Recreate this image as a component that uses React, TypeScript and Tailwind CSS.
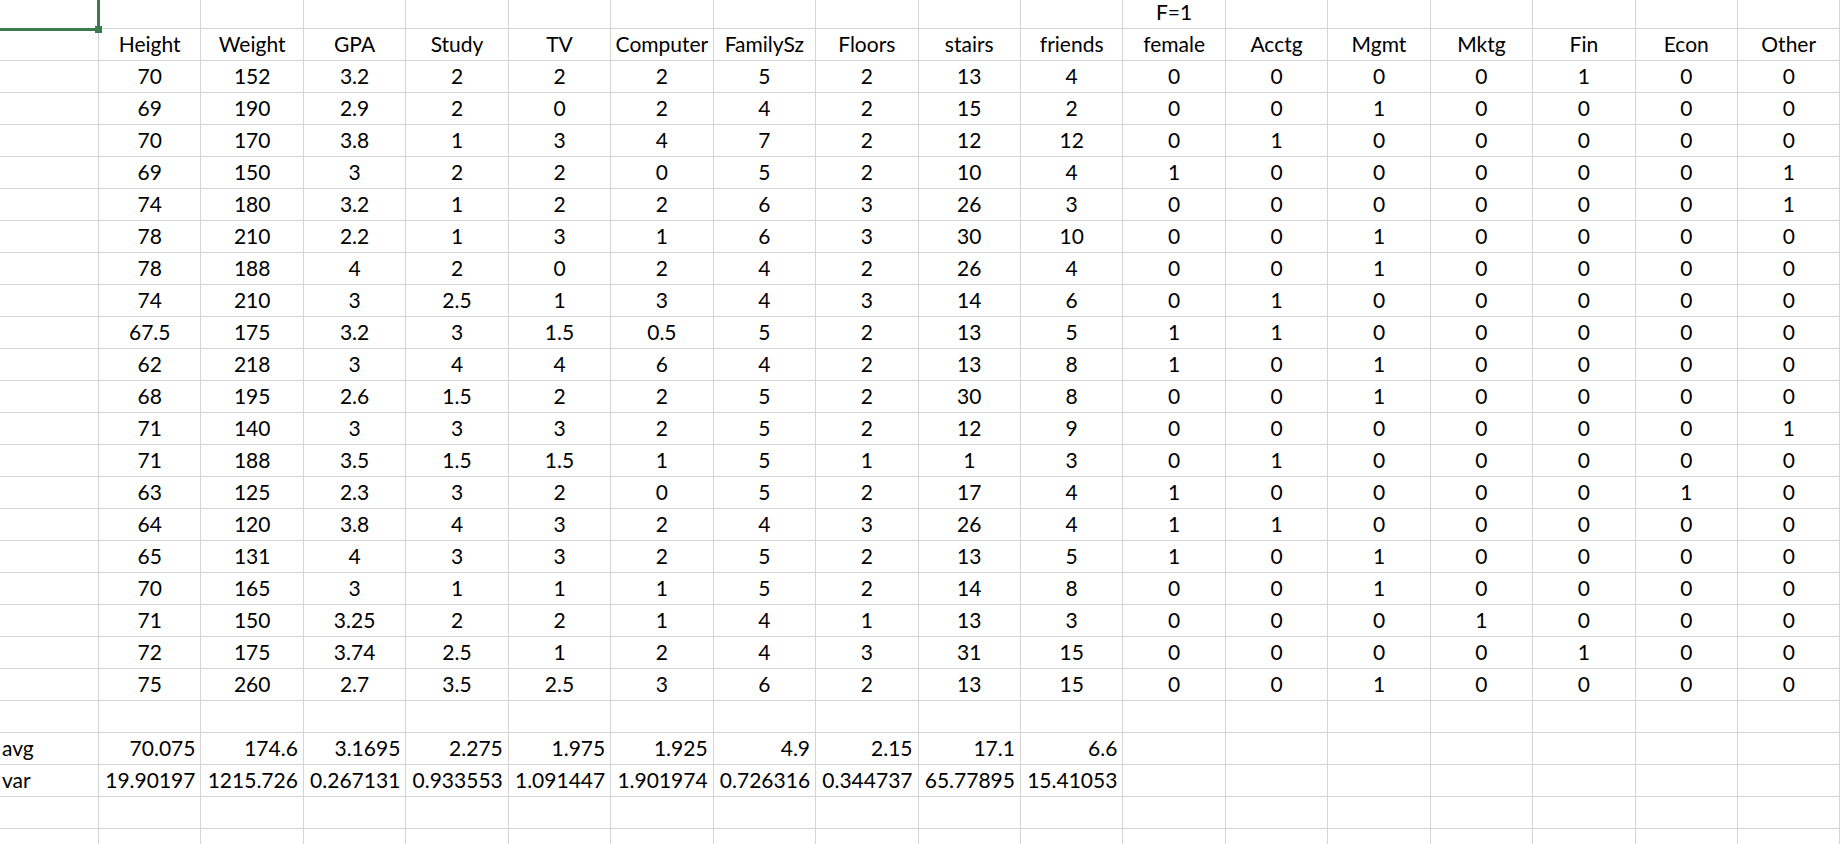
import React from 'react';

const headers = [
  'Height', 'Weight', 'GPA', 'Study', 'TV', 'Computer', 'FamilySz', 'Floors', 'stairs',
  'friends', 'female', 'Acctg', 'Mgmt', 'Mktg', 'Fin', 'Econ', 'Other',
];

const rows: (string | number)[][] = [
  [70, 152, 3.2, 2, 2, 2, 5, 2, 13, 4, 0, 0, 0, 0, 1, 0, 0],
  [69, 190, 2.9, 2, 0, 2, 4, 2, 15, 2, 0, 0, 1, 0, 0, 0, 0],
  [70, 170, 3.8, 1, 3, 4, 7, 2, 12, 12, 0, 1, 0, 0, 0, 0, 0],
  [69, 150, 3, 2, 2, 0, 5, 2, 10, 4, 1, 0, 0, 0, 0, 0, 1],
  [74, 180, 3.2, 1, 2, 2, 6, 3, 26, 3, 0, 0, 0, 0, 0, 0, 1],
  [78, 210, 2.2, 1, 3, 1, 6, 3, 30, 10, 0, 0, 1, 0, 0, 0, 0],
  [78, 188, 4, 2, 0, 2, 4, 2, 26, 4, 0, 0, 1, 0, 0, 0, 0],
  [74, 210, 3, 2.5, 1, 3, 4, 3, 14, 6, 0, 1, 0, 0, 0, 0, 0],
  [67.5, 175, 3.2, 3, 1.5, 0.5, 5, 2, 13, 5, 1, 1, 0, 0, 0, 0, 0],
  [62, 218, 3, 4, 4, 6, 4, 2, 13, 8, 1, 0, 1, 0, 0, 0, 0],
  [68, 195, 2.6, 1.5, 2, 2, 5, 2, 30, 8, 0, 0, 1, 0, 0, 0, 0],
  [71, 140, 3, 3, 3, 2, 5, 2, 12, 9, 0, 0, 0, 0, 0, 0, 1],
  [71, 188, 3.5, 1.5, 1.5, 1, 5, 1, 1, 3, 0, 1, 0, 0, 0, 0, 0],
  [63, 125, 2.3, 3, 2, 0, 5, 2, 17, 4, 1, 0, 0, 0, 0, 1, 0],
  [64, 120, 3.8, 4, 3, 2, 4, 3, 26, 4, 1, 1, 0, 0, 0, 0, 0],
  [65, 131, 4, 3, 3, 2, 5, 2, 13, 5, 1, 0, 1, 0, 0, 0, 0],
  [70, 165, 3, 1, 1, 1, 5, 2, 14, 8, 0, 0, 1, 0, 0, 0, 0],
  [71, 150, 3.25, 2, 2, 1, 4, 1, 13, 3, 0, 0, 0, 1, 0, 0, 0],
  [72, 175, 3.74, 2.5, 1, 2, 4, 3, 31, 15, 0, 0, 0, 0, 1, 0, 0],
  [75, 260, 2.7, 3.5, 2.5, 3, 6, 2, 13, 15, 0, 0, 1, 0, 0, 0, 0],
];

const avg = ['70.075', '174.6', '3.1695', '2.275', '1.975', '1.925', '4.9', '2.15', '17.1', '6.6'];
const variance = ['19.90197', '1215.726', '0.267131', '0.933553', '1.091447', '1.901974', '0.726316', '0.344737', '65.77895', '15.41053'];

const cellBase = 'h-[32px] pb-[1px] border-r border-b border-[#d4d4d4] flex items-center whitespace-nowrap overflow-visible';

function Cell({ value, align = 'center' }: { value?: string | number; align?: 'center' | 'right' | 'left' }) {
  const alignCls =
    align === 'right' ? 'justify-end pr-[5px]' : align === 'left' ? 'justify-start pl-[2px]' : 'justify-center';
  return <div className={`${cellBase} ${alignCls}`}>{value ?? ''}</div>;
}

function BlankRow() {
  return (
    <>
      {Array.from({ length: 18 }).map((_, i) => (
        <Cell key={i} />
      ))}
    </>
  );
}

function StatRow({ label, values }: { label: string; values: string[] }) {
  return (
    <>
      <Cell value={label} align="left" />
      {Array.from({ length: 17 }).map((_, i) => (
        <Cell key={i} value={values[i]} align="right" />
      ))}
    </>
  );
}

export default function App() {
  return (
    <div
      className="relative w-[1842px] h-[844px] overflow-hidden bg-white text-black text-[21px]"
      style={{ fontFamily: 'Lato, "Open Sans", sans-serif' }}
    >
      <div className="grid grid-cols-[99px_repeat(17,102.44px)] -mt-[3px]">
        {/* fila 1: etiqueta F=1 sobre "female" */}
        {Array.from({ length: 18 }).map((_, i) => (
          <Cell key={i} value={i === 11 ? 'F=1' : undefined} />
        ))}

        {/* encabezados */}
        <Cell />
        {headers.map(h => (
          <Cell key={h} value={h} />
        ))}

        {rows.map((r, ri) => (
          <React.Fragment key={ri}>
            <Cell />
            {r.map((v, ci) => (
              <Cell key={ci} value={v} />
            ))}
          </React.Fragment>
        ))}

        <BlankRow />
        <StatRow label="avg" values={avg} />
        <StatRow label="var" values={variance} />
        <BlankRow />
        <BlankRow />
      </div>

      {/* selección de A1 */}
      <div className="absolute left-0 top-[-10px] w-[100px] h-[41px] border-r-[3px] border-b-[3px] border-[#3c7b4f] pointer-events-none" />
      <div className="absolute left-[95px] top-[26px] w-[7px] h-[7px] bg-[#3c7b4f] pointer-events-none" />
    </div>
  );
}
